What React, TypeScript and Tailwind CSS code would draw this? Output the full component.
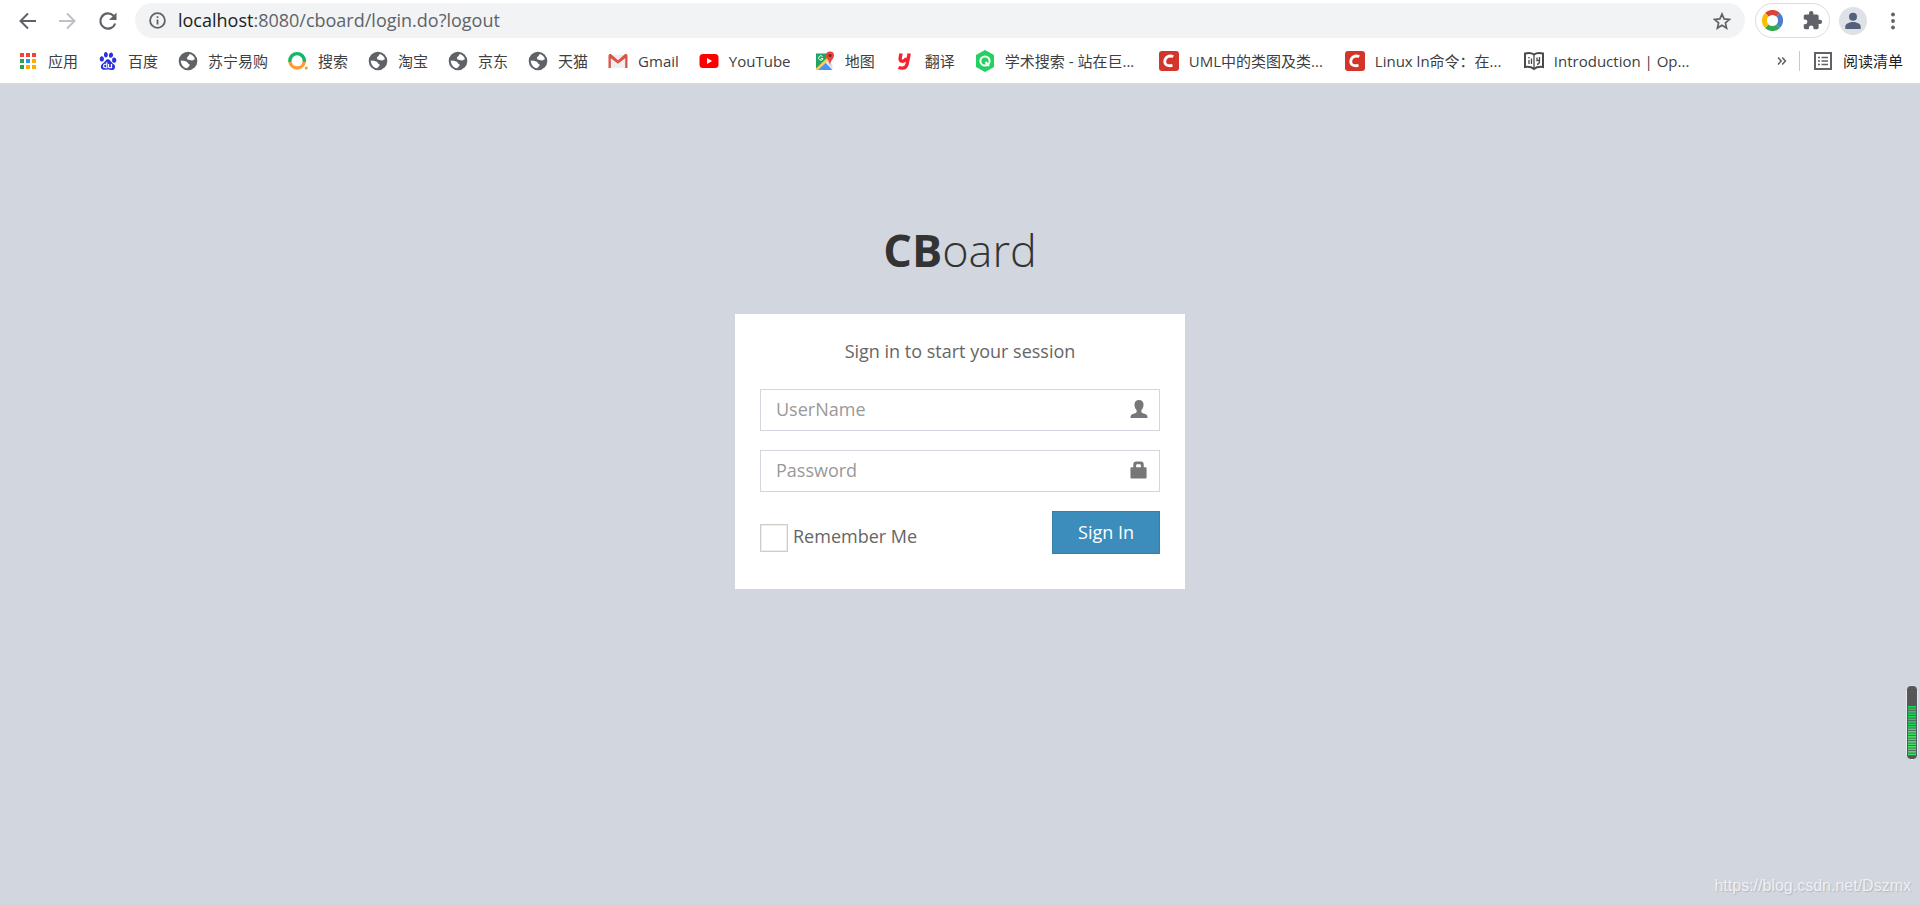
import React, { useState } from "react";
import { SiBaidu } from "react-icons/si";

const AppsIcon = () => {
  const colors = [
    "#f44336", "#f44336", "#f44336",
    "#2e9e52", "#2196f3", "#ffab00",
    "#2e9e52", "#ffab00", "#ffab00",
  ];
  return (
    <svg width="20" height="20" viewBox="0 0 20 20">
      {colors.map((c, i) => (
        <rect key={i} x={2 + (i % 3) * 6} y={2 + Math.floor(i / 3) * 6} width="4" height="4" fill={c} />
      ))}
    </svg>
  );
};

const BaiduIcon = () => <SiBaidu size={18} color="#2932e1" />;

const GlobeIcon = () => (
  <svg width="20" height="20" viewBox="0 0 20 20">
    <circle cx="10" cy="10" r="9.300" fill="#5f6368" />
    <path d="M11.500 3C13.500 3.200 16 5 17 8l-2.200 1.300c-1 .5-2-.3-3.300-.3-1.200 0-2.800-.6-2.500-2.200C9.300 5.500 11 5.300 11.500 3z" fill="#fff" />
    <path d="M2.800 9.500c1.800.3 4.500.2 6 1.200 1.200.8.800 1.800 2 2.300 1.300.4 1 1.500.2 2.200-.8.700-1 1.200-2 2C5.500 16.800 2.700 13.500 2.800 9.500z" fill="#fff" />
  </svg>
);

const SearchIcon = () => (
  <svg width="20" height="20" viewBox="0 0 20 20" fill="none" strokeWidth="3.400">
    <path d="M2 11a7.2 7.2 0 1 1 14.2 0" stroke="#12b76a" />
    <path d="M2 11a7.2 7.2 0 0 0 14.2 0" stroke="#ff9a2e" />
    <circle cx="18.300" cy="17" r="1.600" fill="#ff9a2e" stroke="none" />
  </svg>
);

const GmailIcon = () => (
  <svg width="20" height="20" viewBox="0 0 20 20">
    <path d="M2 4h16v13H2z" fill="#eceff1" />
    <path d="M.5 4.500V17h2.300V7.300l7.200 5.500 7.200-5.500V17h2.300V4.500c0-1.500-1.700-2-2.700-1.200L10 9.300 3.200 3.300C2.200 2.500.5 3 .5 4.500z" fill="#dd5347" />
  </svg>
);

const YouTubeIcon = () => (
  <svg width="20" height="20" viewBox="0 0 20 20">
    <rect x="0.500" y="3" width="19" height="14" rx="3.500" fill="#ff0000" />
    <path d="M8 7l5.200 3L8 13z" fill="#fff" />
  </svg>
);

const MapsIcon = () => (
  <svg width="20" height="20" viewBox="0 0 20 20">
    <path d="M1 2.500h12l-1 6L1 18.500z" fill="#1fa463" />
    <path d="M2 19l8-8 7.500 8z" fill="#5091f5" />
    <path d="M1 17.500L13 6l2 2L3 19H1z" fill="#ffd04b" />
    <path d="M11 11l2-2 4.500 5v4z" fill="#dbe0e3" />
    <path d="M15 .5a4 4 0 0 1 4 4c0 3-3.200 4.500-4 9.500-.8-5-4-6.500-4-9.500a4 4 0 0 1 4-4z" fill="#e8453c" />
    <circle cx="15" cy="4.500" r="1.500" fill="#7b231e" />
    <path d="M7.500 5.500a2.200 2.200 0 1 0 .5 2H6" fill="none" stroke="#fff" />
  </svg>
);

const TranslateIcon = () => (
  <svg width="20" height="20" viewBox="0 0 20 20" fill="none" stroke="#f5222d" strokeWidth="3.400">
    <path d="M6 2.500L5.200 7c-.3 2 .3 3.200 2 3.200 2.200 0 3.600-1 4.300-3.200" />
    <path d="M14.200 2.500l-2 10c-.5 3-2.200 4.600-5 4.600-1.400 0-2.700-.2-3.700-.6" />
  </svg>
);

const ScholarIcon = () => (
  <svg width="20" height="22" viewBox="0 0 20 22">
    <path d="M10 0l9 5v12l-9 5-9-5V5z" fill="#22d160" />
    <circle cx="10" cy="11" r="4.600" fill="none" stroke="#fff" strokeWidth="2" />
    <path d="M10.500 12l3.500 4" stroke="#fff" strokeWidth="2" />
  </svg>
);

const CsdnIcon = () => (
  <svg width="20" height="20" viewBox="0 0 20 20">
    <rect width="20" height="20" rx="3" fill="#d4352a" />
    <path d="M14.300 5.500c-4.500-1.400-8.100.3-8.500 4.500-.4 4 3 5.500 7.700 4.400" fill="none" stroke="#fff" strokeWidth="2.800" />
  </svg>
);

const BookIcon = () => (
  <svg width="20" height="20" viewBox="0 0 20 20" fill="none" stroke="#4a4a4a" strokeWidth="1.600">
    <path d="M1 2.500c3.500-1 6.500-.8 9 1 2.500-1.800 5.500-2 9-1v13.500c-3.500-.6-6.500-.2-9 2-2.500-2.200-5.500-2.600-9-2z" strokeWidth="2" />
    <path d="M10 3.500V18M5 13V9M5 7.500V6M7.500 13V7.500M13 6.500v3h2.500v-3.500M13 13.500c2-.5 2.800-2 2.500-4.500" strokeWidth="1.300" />
  </svg>
);

const bookmarks = [
  { title: "应用", icon: AppsIcon },
  { title: "百度", icon: BaiduIcon },
  { title: "苏宁易购", icon: GlobeIcon },
  { title: "搜索", icon: SearchIcon },
  { title: "淘宝", icon: GlobeIcon },
  { title: "京东", icon: GlobeIcon },
  { title: "天猫", icon: GlobeIcon },
  { title: "Gmail", icon: GmailIcon },
  { title: "YouTube", icon: YouTubeIcon, width: "w-[66px]" },
  { title: "地图", icon: MapsIcon },
  { title: "翻译", icon: TranslateIcon },
  { title: "学术搜索 - 站在巨...", icon: ScholarIcon, width: "w-[134px]" },
  { title: "UML中的类图及类...", icon: CsdnIcon, width: "w-[136px]" },
  { title: "Linux ln命令：在...", icon: CsdnIcon, width: "w-[129px]" },
  { title: "Introduction | Op...", icon: BookIcon, width: "w-[136px]" },
];

const Bookmark = ({ title, width, Icon }: { title: string; width?: string; Icon: React.FC }) => (
  <a href="#" className="flex items-center gap-[10px] whitespace-nowrap">
    <span className="flex w-5 justify-center">
      <Icon />
    </span>
    <span className={width}>{title}</span>
  </a>
);

const Toolbar = () => {
  const url = "localhost:8080/cboard/login.do?logout";
  const colon = url.indexOf(":");
  return (
    <div className="flex h-[41px] items-center pr-[17px] pl-[18px] text-[#5f6368]">
      <button aria-label="Back">
        <svg width="20" height="20" viewBox="0 0 20 20" fill="none" stroke="#5f6368" strokeWidth="2">
          <path d="M18 10H2.500M10 2.500L2.500 10l7.500 7.500" />
        </svg>
      </button>
      <button aria-label="Forward" className="ml-5">
        <svg width="20" height="20" viewBox="0 0 20 20" fill="none" stroke="#bdc1c6" strokeWidth="2">
          <path d="M1 10h15.500M9 2.500l7.500 7.500-7.500 7.500" />
        </svg>
      </button>
      <button aria-label="Reload" className="ml-5">
        <svg width="20" height="20" viewBox="0 0 20 20" fill="none" stroke="#5f6368" strokeWidth="2.200">
          <path d="M17.200 12.500A7.600 7.600 0 1 1 15.500 4.800L17 6.300" />
          <path d="M18.500 1.500v7.500H11z" fill="#5f6368" stroke="none" />
        </svg>
      </button>
      <div className="ml-[17px] flex h-[35px] grow items-center rounded-full bg-[#f1f3f4] pr-[14px] pl-[14px]">
        <svg width="17" height="17" viewBox="0 0 17 17" fill="none" stroke="#5f6368" strokeWidth="1.800">
          <circle cx="8.500" cy="8.500" r="7.400" />
          <path d="M8.500 7.500v5M8.500 4.300v1.800" />
        </svg>
        <a href="#" className="ml-3 grow pb-[2px] text-[18px] leading-6">
          <span className="text-[#202124]">{url.slice(0, colon)}</span>
          {url.slice(colon)}
        </a>
        <button aria-label="Bookmark this page">
          <svg width="18" height="18" viewBox="0 0 18 18" fill="none" stroke="#5f6368" strokeWidth="1.700">
            <path d="M9 2l2.100 4.900 5.300.5-4 3.500 1.200 5.200L9 13.300l-4.600 2.800 1.200-5.200-4-3.500 5.300-.5z" />
          </svg>
        </button>
      </div>
      <div className="ml-[10px] flex h-[35px] w-[75px] items-center justify-between rounded-full border border-[#dadce0] px-[6px]">
        <button aria-label="Extension">
          <svg width="21" height="21" viewBox="0 0 21 21" fill="none" strokeWidth="5">
            <path d="M4.800 4.800a8 8 0 0 1 11.400 0" stroke="#db4437" />
            <path d="M16.200 4.800a8 8 0 0 1 0 11.400" stroke="#4a7fd0" />
            <path d="M16.200 16.200a8 8 0 0 1-11.400 0" stroke="#34a853" />
            <path d="M4.800 16.200a8 8 0 0 1 0-11.400" stroke="#fbbc05" />
          </svg>
        </button>
        <button aria-label="Extensions">
          <svg width="21" height="21" viewBox="0 0 24 24" fill="#5f6368">
            <path d="M20.500 11H19V7c0-1.100-.9-2-2-2h-4V3.500a2.500 2.500 0 0 0-5 0V5H4c-1.100 0-2 .9-2 2v3.800h1.500a2.700 2.700 0 0 1 0 5.400H2V20c0 1.100.9 2 2 2h3.800v-1.500a2.700 2.700 0 0 1 5.400 0V22H17c1.100 0 2-.9 2-2v-4h1.500a2.500 2.500 0 0 0 0-5z" />
          </svg>
        </button>
      </div>
      <button aria-label="Profile" className="ml-[9px]">
        <svg width="28" height="28" viewBox="0 0 28 28">
          <circle cx="14" cy="14" r="14" fill="#dee1e6" />
          <circle cx="14" cy="9.800" r="4" fill="#55607a" />
          <path d="M6.300 22v-2.500c0-3 4.500-4.500 7.700-4.500s7.700 1.500 7.700 4.500V22z" fill="#55607a" />
        </svg>
      </button>
      <button aria-label="Menu" className="ml-4">
        <svg width="20" height="20" viewBox="0 0 20 20" fill="#5f6368">
          <circle cx="10" cy="3.500" r="1.900" />
          <circle cx="10" cy="10" r="1.900" />
          <circle cx="10" cy="16.500" r="1.900" />
        </svg>
      </button>
    </div>
  );
};

const BookmarksBar = () => (
  <div className="flex h-[42px] items-center pr-[17px] pb-[2px] pl-[18px] text-[15px] leading-5 text-[#3c4043]">
    <nav className="flex items-center gap-5">
      {bookmarks.map((b, i) => (
        <Bookmark key={i} title={b.title} width={b.width} Icon={b.icon} />
      ))}
    </nav>
    <button aria-label="More bookmarks" className="ml-auto">
      <svg width="10" height="10" viewBox="0 0 10 10" fill="none" stroke="#5f6368" strokeWidth="1.600">
        <path d="M1 1.500L4.200 5 1 8.500M5.200 1.500L8.400 5 5.200 8.500" />
      </svg>
    </button>
    <span className="ml-3 h-5 w-px bg-[#c8cacd]" />
    <button className="ml-[14px] flex items-center gap-[11px] whitespace-nowrap text-[#202124]">
      <svg width="18" height="18" viewBox="0 0 18 18" fill="none" stroke="#5f6368" strokeWidth="2">
        <path d="M1 1h16v16H1z" />
        <path d="M4 5.500h2M4 9h2M4 12.500h2M7.500 5.500H14M7.500 9H14M7.500 12.500H14" strokeWidth="1.600" />
      </svg>
      阅读清单
    </button>
  </div>
);

const LoginBox = () => {
  const [remember, setRemember] = useState(false);
  return (
    <div className="mx-auto w-[450px]">
      <h1 className="mb-8 text-center text-[45px] leading-[64px] font-light text-[#333]">
        <b className="font-bold">CB</b>oard
      </h1>
      <form className="bg-white p-[25px] pt-[23px] text-[18px] leading-7 text-[#666]" onSubmit={(e) => e.preventDefault()}>
        <p className="mb-6 text-center">Sign in to start your session</p>
        <div className="relative mb-[19px]">
          <input
            aria-label="UserName"
            placeholder="UserName"
            className="block h-[42px] w-full border border-[#d2d6de] px-[15px] pb-[2px] placeholder-[#999] outline-none"
          />
          <svg className="absolute top-[11px] right-3" width="18" height="18" viewBox="0 0 18 19" fill="#777">
            <path d="M9 0c3 0 4.800 2 4.800 5 0 2.300-1 4.600-2.300 5.600v2c.5 1 2 1.500 4 2.200 1.700.6 2.500 1.400 2.500 4.200H0c0-2.800.8-3.600 2.500-4.200 2-.7 3.500-1.200 4-2.200v-2C5.200 9.600 4.200 7.300 4.200 5c0-3 1.800-5 4.800-5z" />
          </svg>
        </div>
        <div className="relative mb-[19px]">
          <input
            type="password"
            aria-label="Password"
            placeholder="Password"
            className="block h-[42px] w-full border border-[#d2d6de] px-[15px] pb-[2px] placeholder-[#999] outline-none"
          />
          <svg className="absolute top-[11px] right-3" width="18" height="18" viewBox="0 0 18 19" fill="#777">
            <path fillRule="evenodd" d="M0 7.500Q0 6.500 1 6.500H3V4Q3 .5 6 .5H11Q14 .5 14 4V6.500H16Q17 6.500 17 7.500V17.500Q17 18.500 16 18.500H1Q0 18.500 0 17.500zM6 6.500H11V4.500Q11 3.500 10 3.500H7Q6 3.500 6 4.500z" />
          </svg>
        </div>
        <div className="flex items-start justify-between">
          <label className="mt-[13px] mb-[12px] flex gap-[5px]">
            <input
              type="checkbox"
              checked={remember}
              onChange={() => setRemember(!remember)}
              className="h-7 w-7 appearance-none border border-[#d0ccc6] bg-white shadow-[inset_0_0_0_1px_#f0eeeb] checked:bg-[#3c8dbc]"
            />
            <span className="leading-6">Remember Me</span>
          </label>
          <button className="h-[43px] w-[108px] border border-[#367fa9] bg-[#3c8dbc] pb-[2px] text-white">Sign In</button>
        </div>
      </form>
    </div>
  );
};

// green level meter at the right edge of the page
const Meter = () => (
  <svg className="absolute top-[685px] right-[2px]" width="12" height="75" viewBox="0 0 12 75">
    <rect x="0.500" y="0.500" width="11" height="74" rx="4" fill="#55575a" stroke="#e8eaee" />
    {Array.from({ length: 20 }, (_, i) => (
      <rect key={i} x="2" y={21 + i * 2.5} width="8" height="1.700" fill={i < 9 ? "#1fd15a" : "#3fe266"} />
    ))}
  </svg>
);

export default function App() {
  return (
    <div className="flex min-h-screen flex-col bg-[#d2d6de] font-['Open_Sans','Noto_Sans_CJK_SC',sans-serif]">
      <header className="border-b-2 border-[#d8d9de] bg-white">
        <Toolbar />
        <BookmarksBar />
      </header>
      <main className="grow pt-[133px]">
        <LoginBox />
      </main>
      <Meter />
      <footer className="flex justify-end pr-[9px] pb-[7px] font-['Liberation_Sans',sans-serif] text-base text-[#eef0f4]">
        <a href="#" className="[text-shadow:1px_1px_1px_#b4b8c0]">https://blog.csdn.net/Dszmx</a>
      </footer>
    </div>
  );
}
